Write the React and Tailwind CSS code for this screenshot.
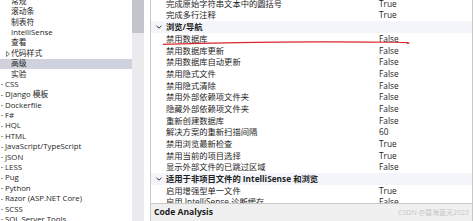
import React from "react";

const treeItems = [
  { label: "常规", level: 1 },
  { label: "滚动条", level: 1 },
  { label: "制表符", level: 1 },
  { label: "IntelliSense", level: 1 },
  { label: "查看", level: 1 },
  { label: "代码样式", level: 1, expander: true },
  { label: "高级", level: 1, selected: true },
  { label: "实验", level: 1 },
  { label: "CSS", level: 0 },
  { label: "Django 模板", level: 0 },
  { label: "Dockerfile", level: 0 },
  { label: "F#", level: 0 },
  { label: "HQL", level: 0 },
  { label: "HTML", level: 0 },
  { label: "JavaScript/TypeScript", level: 0 },
  { label: "JSON", level: 0 },
  { label: "LESS", level: 0 },
  { label: "Pug", level: 0 },
  { label: "Python", level: 0 },
  { label: "Razor (ASP.NET Core)", level: 0 },
  { label: "SCSS", level: 0 },
  { label: "SQL Server Tools", level: 0 },
];

const rows = [
  { name: "完成原始字符串文本中的圆括号", value: "True" },
  { name: "完成多行注释", value: "True" },
  { name: "浏览/导航", category: true },
  { name: "禁用数据库", value: "False" },
  { name: "禁用数据库更新", value: "False" },
  { name: "禁用数据库自动更新", value: "False" },
  { name: "禁用隐式文件", value: "False" },
  { name: "禁用隐式清除", value: "False" },
  { name: "禁用外部依赖项文件夹", value: "False" },
  { name: "隐藏外部依赖项文件夹", value: "False" },
  { name: "重新创建数据库", value: "False" },
  { name: "解决方案的重新扫描间隔", value: "60" },
  { name: "禁用浏览最新检查", value: "True" },
  { name: "禁用当前的项目选择", value: "True" },
  { name: "显示外部文件的已跳过区域", value: "False" },
  { name: "适用于非项目文件的 IntelliSense 和浏览", category: true },
  { name: "启用增强型单一文件", value: "True" },
  { name: "启用 IntelliSense 诊断缓存", value: "False" },
];

const Chevron = () => (
  <svg width="6" height="4" viewBox="0 0 6 4" className="shrink-0">
    <path d="M0.5 0.8 L3 3.2 L5.5 0.8" fill="none" stroke="#333" strokeWidth="1" />
  </svg>
);

export default function App() {
  return (
    <div
      className="w-[474px] h-[221px] flex overflow-hidden bg-white text-[#1e1e1e]"
      style={{ fontFamily: '"Open Sans", "Noto Sans CJK SC", sans-serif' }}
    >
      {/* Tree */}
      <div className="w-[132px] shrink-0 overflow-hidden">
        <div className="-mt-[3.5px]">
          {treeItems.map((it) => (
            <div
              key={it.label}
              className={`h-[10.4px] flex items-center text-[7.8px] leading-none whitespace-nowrap ${
                it.selected ? "bg-[#cfd1dc]" : ""
              }`}
            >
              {it.level === 0 ? (
                <>
                  <span className="w-[2px] h-[1px] bg-[#999] ml-[1px] mr-[2px]" />
                  <span>{it.label}</span>
                </>
              ) : (
                <>
                  <span className="w-[11px] flex justify-end pr-[1px]">
                    {it.expander && (
                      <svg width="4" height="6" viewBox="0 0 4 6">
                        <path d="M0.5 0.5 L3.5 3 L0.5 5.5 Z" fill="none" stroke="#666" strokeWidth="0.8" />
                      </svg>
                    )}
                  </span>
                  <span>{it.label}</span>
                </>
              )}
            </div>
          ))}
        </div>
      </div>

      {/* Scrollbar */}
      <div className="w-[12px] shrink-0 bg-[#ebebee]">
        <div className="h-[33px] bg-[#c4c5cb]" />
      </div>
      <div className="w-[6px] shrink-0" />

      {/* Property grid */}
      <div className="flex-1 flex flex-col border-l border-[#c9c9c9] min-w-0 mr-[1px] border-r">
        <div className="relative flex-1 overflow-hidden border-b border-[#c8c8c8]">
          <div className="-mt-[1.9px]">
            {rows.map((r) =>
              r.category ? (
                <div
                  key={r.name}
                  className="h-[11.7px] flex items-center bg-[#f3f5fa] text-[8.3px] font-bold leading-none whitespace-nowrap"
                >
                  <span className="w-[15px] flex justify-center pl-[1px]">
                    <Chevron />
                  </span>
                  <span>{r.name}</span>
                </div>
              ) : (
                <div
                  key={r.name}
                  className="h-[11.7px] flex items-center text-[8.3px] leading-none whitespace-nowrap"
                >
                  <span className="w-[228px] pl-[15px] overflow-hidden">{r.name}</span>
                  <span>{r.value}</span>
                </div>
              )
            )}
          </div>
          <svg
            className="absolute left-0 top-0 pointer-events-none"
            width="320"
            height="60"
          >
            <path
              d="M12 44.3 Q 90 41.6 180 41.8 T 256 43.3"
              fill="none"
              stroke="#d8262c"
              strokeWidth="1.2"
            />
          </svg>
        </div>
        <div className="h-[17px] shrink-0 bg-[#f0f0f0] flex items-center justify-between pl-[3px] pr-[3px]">
          <span className="text-[8.6px] font-bold leading-none">Code Analysis</span>
          <span className="text-[7px] leading-none text-[#c6c6c6]">CSDN @碧海蓝天2022</span>
        </div>
      </div>
    </div>
  );
}
